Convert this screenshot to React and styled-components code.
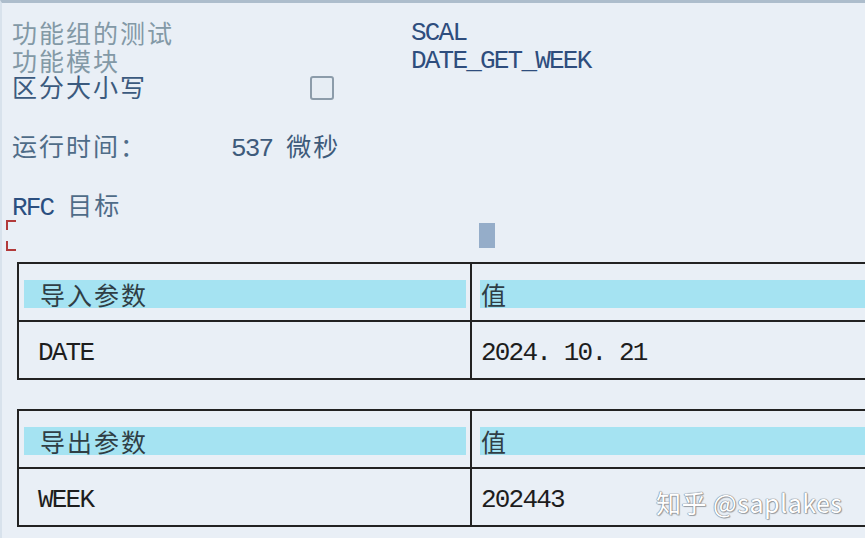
import React from "react";
import styled, { createGlobalStyle } from "styled-components";

const GlobalStyle = createGlobalStyle`
  html, body {
    margin: 0;
    padding: 0;
    overflow: hidden;
    background: #e9eff6;
  }
  body {
    font-family: "Noto Sans CJK SC", "Liberation Sans", sans-serif;
  }
`;

const Page = styled.div`
  position: relative;
  width: 865px;
  height: 538px;
  box-sizing: border-box;
  border-top: 3px solid #adbdcc;
  border-left: 2px solid #d8e2ec;
  padding: 12px 0 0 4px;
  background: #e9eff6;
  overflow: hidden;
`;

const Info = styled.div`
  padding-left: 6px;
`;

const FieldRow = styled.div`
  display: grid;
  grid-template-columns: 399px 1fr;
  align-items: center;
  height: 28px;
`;

const LabelCell = styled.div`
  display: grid;
  grid-template-columns: 298px auto;
  align-items: center;
`;

/* Chinese labels: a slightly wide, short glyph box like the SAP GUI font */
const Label = styled.span`
  font-size: 25px;
  letter-spacing: 2px;
  line-height: 28px;
  color: ${(p) => (p.$tone === "muted" ? "#8399a6" : p.$tone === "mid" ? "#4f6c88" : "#3b5a7e")};
  white-space: nowrap;
`;

const Mono = styled.span`
  font-family: "Liberation Mono", monospace;
  font-size: 26px;
  letter-spacing: -1.8px;
  color: ${(p) => p.$color || "inherit"};
`;

const Value = styled.span`
  font-family: "Liberation Mono", monospace;
  font-size: 26px;
  letter-spacing: -1.8px;
  padding-top: 3px;
  color: #2e4d7d;
  white-space: nowrap;
`;

const Checkbox = styled.span`
  display: block;
  width: 20px;
  height: 20px;
  border: 2px solid #8c9caa;
  border-radius: 3px;
  background: #e6edf4;
  margin-top: 5px;
`;

const TextRow = styled.div`
  margin-top: ${(p) => p.$gap}px;
  height: 28px;
  line-height: 28px;
  white-space: nowrap;
  padding-left: 6px;
`;

const Runtime = styled.span`
  display: inline-block;
  margin-left: ${(p) => p.$indent || 0}px;
  font-size: 25px;
  letter-spacing: 2px;
  color: #3e5b7b;
`;

const MarkerRow = styled.div`
  display: grid;
  grid-template-columns: 473px auto;
  height: 30px;
  margin-top: 2px;
`;

const Bracket = styled.div`
  display: flex;
  flex-direction: column;
  justify-content: space-between;
  height: 31px;
`;

const BracketCorner = styled.span`
  display: block;
  width: 8px;
  height: 8px;
  border-left: 2px solid #b23a3a;
  ${(p) => (p.$bottom ? "border-bottom: 2px solid #b23a3a;" : "border-top: 2px solid #b23a3a;")}
`;

const Slider = styled.span`
  display: block;
  width: 16px;
  height: 25px;
  margin-top: 3px;
  background: #95adc9;
`;

const Table = styled.div`
  display: grid;
  grid-template-columns: 453px 1fr;
  width: 900px;
  margin: ${(p) => p.$top}px 0 0 11px;
  border: 2px solid #222;
  box-sizing: border-box;
`;

const HeadCell = styled.div`
  height: 58px;
  box-sizing: border-box;
  padding: 16px ${(p) => (p.$first ? "4px" : "0")} 14px ${(p) => (p.$first ? "5px" : "8px")};
  border-bottom: 2px solid #222;
  ${(p) => p.$first && "border-right: 2px solid #222;"}
`;

const HeadStrip = styled.div`
  height: 28px;
  line-height: 28px;
  background: #a5e3f2;
  padding-left: ${(p) => p.$pad}px;
  font-size: 25px;
  letter-spacing: 2px;
  color: #2f3e45;
  white-space: nowrap;
`;

const DataCell = styled.div`
  height: 56px;
  box-sizing: border-box;
  padding-top: 3px;
  line-height: 56px;
  padding-left: ${(p) => (p.$first ? 19 : 9)}px;
  ${(p) => p.$first && "border-right: 2px solid #222;"}
  font-family: "Liberation Mono", monospace;
  font-size: 26px;
  letter-spacing: -1.8px;
  color: #1d1d1d;
  white-space: nowrap;
`;

const Watermark = styled.div`
  position: absolute;
  left: 654px;
  top: 481px;
  font-family: "Noto Sans CJK SC", "Liberation Sans", sans-serif;
  font-size: 25px;
  letter-spacing: 0.5px;
  color: #ffffff;
  white-space: nowrap;
  text-shadow: 0 0 1px #7d838b, 0 0 1px #7d838b, 0 0 1px #7d838b, 1px 1px 1px rgba(0, 0, 0, 0.3);
`;

const ParamTable = ({ title, name, value, top }) => (
  <Table $top={top}>
    <HeadCell $first>
      <HeadStrip $pad={16}>{title}</HeadStrip>
    </HeadCell>
    <HeadCell>
      <HeadStrip $pad={1}>值</HeadStrip>
    </HeadCell>
    <DataCell $first>{name}</DataCell>
    <DataCell>{value}</DataCell>
  </Table>
);

export default function App() {
  return (
    <>
      <GlobalStyle />
      <Page>
        <Info>
          <FieldRow>
            <Label $tone="muted">功能组的测试</Label>
            <Value>SCAL</Value>
          </FieldRow>
          <FieldRow>
            <Label $tone="muted">功能模块</Label>
            <Value>DATE_GET_WEEK</Value>
          </FieldRow>
          <FieldRow>
            <LabelCell>
              <Label>区分大小写</Label>
              <Checkbox />
            </LabelCell>
          </FieldRow>
        </Info>

        <TextRow $gap={32}>
          <Label $tone="mid">运行时间：</Label>
          <Runtime $indent={84}>
            <Mono>537 </Mono>微秒
          </Runtime>
        </TextRow>

        <TextRow $gap={31}>
          <Mono $color="#2b4f80">RFC </Mono>
          <Label $tone="mid">目标</Label>
        </TextRow>

        <MarkerRow>
          <Bracket>
            <BracketCorner />
            <BracketCorner $bottom />
          </Bracket>
          <Slider />
        </MarkerRow>

        <ParamTable top={12} title="导入参数" name="DATE" value="2024. 10. 21" />
        <ParamTable top={29} title="导出参数" name="WEEK" value="202443" />

        <Watermark>知乎 @saplakes</Watermark>
      </Page>
    </>
  );
}
